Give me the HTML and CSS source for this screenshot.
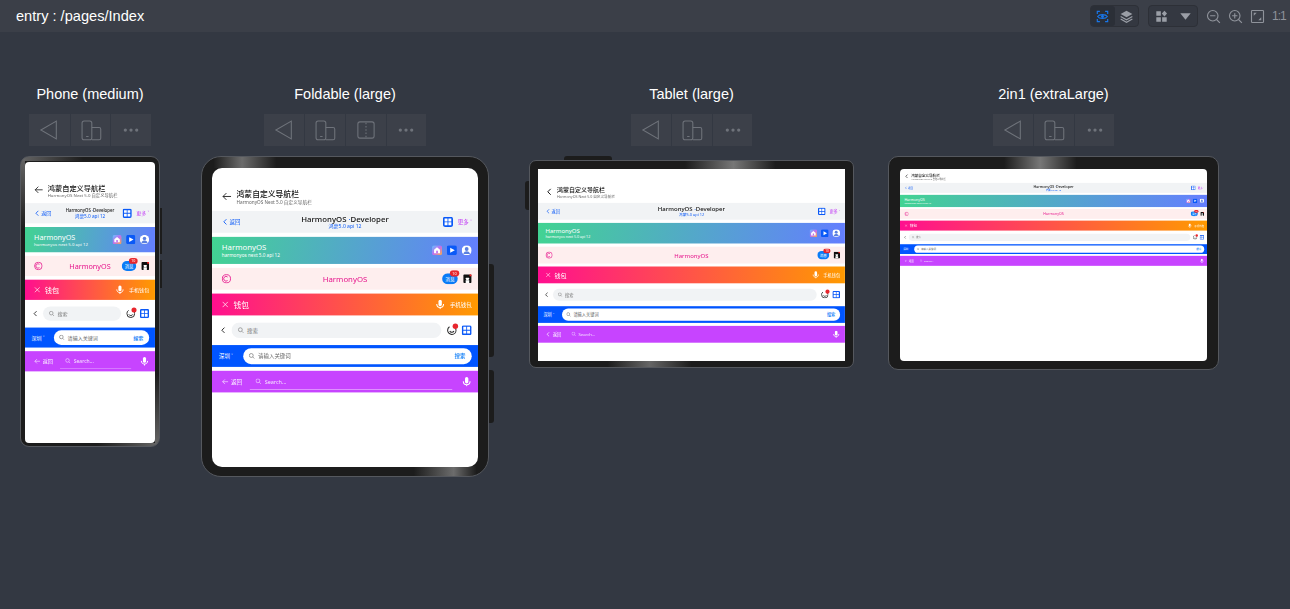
FILE: index.html
```html
<!DOCTYPE html>
<html lang="zh">
<head>
<meta charset="utf-8">
<title>Previewer</title>
<link rel="stylesheet" href="styles.css">
</head>
<body>
<svg class="defs" width="0" height="0" aria-hidden="true">
  <defs>
    <linearGradient id="appg" x1="0" y1="0" x2="1" y2="1"><stop offset="0" stop-color="#5ec8ff"/><stop offset=".5" stop-color="#c06cf0"/><stop offset="1" stop-color="#ffb03a"/></linearGradient>
    <symbol id="i-arrow" viewBox="0 0 24 24"><path d="M22 12H3M11 4l-8 8 8 8" fill="none" stroke="currentColor" stroke-width="2"/></symbol>
    <symbol id="i-chev" viewBox="0 0 24 24"><path d="M16 3l-9 9 9 9" fill="none" stroke="currentColor" stroke-width="3"/></symbol>
    <symbol id="i-close" viewBox="0 0 24 24"><path d="M3 3l18 18M21 3L3 21" fill="none" stroke="currentColor" stroke-width="2.4"/></symbol>
    <symbol id="i-search" viewBox="0 0 24 24"><circle cx="10" cy="10" r="7.5" fill="none" stroke="currentColor" stroke-width="2.4"/><path d="M16 16l6 6" stroke="currentColor" stroke-width="2.4"/></symbol>
    <symbol id="i-grid" viewBox="0 0 24 24"><rect width="24" height="24" rx="5" fill="currentColor"/><path d="M4 4h7v7H4zM13 4h7v7h-7zM4 13h7v7H4zM13 13h7v7h-7z" fill="#fff"/></symbol>
    <symbol id="i-app" viewBox="0 0 24 24"><rect width="24" height="24" rx="6" fill="url(#appg)"/><path d="M12 5l7 6v8H5v-8z" fill="#fff"/><rect x="10" y="13" width="4" height="6" fill="#c06cf0"/></symbol>
    <symbol id="i-play" viewBox="0 0 24 24"><rect width="24" height="24" rx="5" fill="#0a59f7"/><path d="M8 6l11 6-11 6z" fill="#fff"/></symbol>
    <symbol id="i-user" viewBox="0 0 24 24"><circle cx="12" cy="12" r="12" fill="#fff"/><circle cx="12" cy="9" r="4.5" fill="#5a7fe0"/><path d="M4 21c1-5 5-6.500 8-6.500s7 1.500 8 6.500" fill="#5a7fe0"/></symbol>
    <symbol id="i-ring" viewBox="0 0 24 24"><circle cx="12" cy="12" r="10.500" fill="none" stroke="currentColor" stroke-width="2.200"/><path d="M15 7.500A6 6 0 1 0 15 16.500" fill="none" stroke="currentColor" stroke-width="2.200"/></symbol>
    <symbol id="i-pic" viewBox="0 0 24 24"><rect width="24" height="24" rx="3" fill="#111"/><circle cx="12" cy="11" r="5" fill="#fff"/><rect x="7" y="16" width="10" height="8" fill="#fff"/><path d="M6 9h12V4H6z" fill="#111"/><rect x="18" width="6" height="5" fill="#f22"/></symbol>
    <symbol id="i-mic" viewBox="0 0 24 24"><rect x="8" y="1" width="8" height="15" rx="4" fill="currentColor"/><path d="M4 11c0 5 3 8 8 8s8-3 8-8M12 19v4" fill="none" stroke="currentColor" stroke-width="2.400"/></symbol>
    <symbol id="i-face" viewBox="0 0 24 24"><circle cx="12" cy="12" r="10" fill="none" stroke="#222" stroke-width="2.400" stroke-dasharray="40 10"/><path d="M7 14c2 4 8 4 10 0" fill="none" stroke="#222" stroke-width="2.400"/></symbol>
    <symbol id="t-back" viewBox="0 0 32 32"><path d="M25 5v22L6 16z" fill="none" stroke="currentColor" stroke-width="1.300"/></symbol>
    <symbol id="t-rotate" viewBox="0 0 32 32"><rect x="5" y="5" width="12" height="23" rx="2.500" fill="none" stroke="currentColor" stroke-width="1.300"/><path d="M10 24h3M17 13h9a2 2 0 0 1 2 2v11a2 2 0 0 1-2 2h-9" fill="none" stroke="currentColor" stroke-width="1.300"/></symbol>
    <symbol id="t-fold" viewBox="0 0 32 32"><rect x="6" y="6" width="20" height="20" rx="2.500" fill="none" stroke="currentColor" stroke-width="1.300"/><path d="M16 7v18" stroke="currentColor" stroke-width="1.300" stroke-dasharray="2 2"/></symbol>
    <symbol id="t-more" viewBox="0 0 32 32"><circle cx="9" cy="16" r="2" fill="currentColor"/><circle cx="16" cy="16" r="2" fill="currentColor"/><circle cx="23" cy="16" r="2" fill="currentColor"/></symbol>
    <symbol id="h-eye" viewBox="0 0 20 20"><path d="M2 6V2h4M14 2h4v4M18 14v4h-4M6 18H2v-4" fill="none" stroke="currentColor" stroke-width="1.800"/><path d="M2.500 10C5 6 15 6 17.500 10 15 14 5 14 2.500 10z" fill="none" stroke="currentColor" stroke-width="1.800"/><circle cx="10" cy="10" r="2.200" fill="currentColor"/></symbol>
    <symbol id="h-layers" viewBox="0 0 20 20"><path d="M10 1l9 5-9 5-9-5z" fill="currentColor"/><path d="M1 10l9 5 9-5M1 14l9 5 9-5" fill="none" stroke="currentColor" stroke-width="1.800"/></symbol>
    <symbol id="h-tiles" viewBox="0 0 20 20"><path d="M2 2h7v7H2zM2 11h7v7H2zM11 11h7v7h-7z" fill="currentColor"/><path d="M14.500 1l4 4.500-4 4.500-4-4.500z" fill="currentColor"/></symbol>
    <symbol id="h-down" viewBox="0 0 20 20"><path d="M2 5h16l-8 10z" fill="currentColor"/></symbol>
    <symbol id="h-out" viewBox="0 0 20 20"><circle cx="9" cy="9" r="7" fill="none" stroke="currentColor" stroke-width="1.500"/><path d="M5.500 9h7M14 14l4.500 4.500" stroke="currentColor" stroke-width="1.500"/></symbol>
    <symbol id="h-in" viewBox="0 0 20 20"><circle cx="9" cy="9" r="7" fill="none" stroke="currentColor" stroke-width="1.500"/><path d="M5.500 9h7M9 5.500v7M14 14l4.500 4.500" stroke="currentColor" stroke-width="1.500"/></symbol>
    <symbol id="h-fit" viewBox="0 0 20 20"><rect x="2" y="2" width="16" height="16" rx="1" fill="none" stroke="currentColor" stroke-width="1.500"/><path d="M11 15h4v-4zM9 5H5v4z" fill="currentColor"/></symbol>
  </defs>
</svg>

<header class="topbar">
  <div class="route">entry : /pages/Index</div>
  <div class="tools">
    <div class="seg seg-a">
      <span class="seg-btn active"><svg class="hi"><use href="#h-eye"/></svg></span>
      <span class="seg-btn"><svg class="hi"><use href="#h-layers"/></svg></span>
    </div>
    <div class="seg seg-b">
      <span class="seg-btn"><svg class="hi"><use href="#h-tiles"/></svg></span>
      <span class="seg-btn"><svg class="hi"><use href="#h-down"/></svg></span>
    </div>
    <svg class="hi plain"><use href="#h-out"/></svg>
    <svg class="hi plain"><use href="#h-in"/></svg>
    <svg class="hi plain"><use href="#h-fit"/></svg>
    <span class="one">1:1</span>
  </div>
</header>

<main class="stage">

  <section class="col col-phone">
    <h2 class="label">Phone (medium)</h2>
    <div class="toolbar">
      <span class="tbtn"><svg class="ti"><use href="#t-back"/></svg></span>
      <span class="tbtn"><svg class="ti"><use href="#t-rotate"/></svg></span>
      <span class="tbtn"><svg class="ti"><use href="#t-more"/></svg></span>
    </div>
    <div class="frame">
      <i class="side side-a"></i><i class="side side-b"></i>
      <div class="screen">
        <div class="app">
          <div class="r-title"><svg class="ic back"><use href="#i-arrow"/></svg><div><div class="t1">鸿蒙自定义导航栏</div><div class="t2">HarmonyOS Next 5.0 自定义导航栏</div></div></div>
          <div class="row r-light"><div class="grp"><svg class="ic sm blue"><use href="#i-chev"/></svg><span class="link">返回</span></div><div class="mid"><div class="mid1">HarmonyOS <span class="blue">·</span>Developer</div><div class="mid2">鸿蒙5.0 api 12</div></div><div class="grp end"><svg class="ic blue"><use href="#i-grid"/></svg><span class="more">更多 ˅</span></div></div>
          <div class="row r-green"><div class="fill"><div class="g1">HarmonyOS</div><div class="g2">harmonyos next 5.0 api 12</div></div><div class="grp icons"><svg class="ic"><use href="#i-app"/></svg><svg class="ic"><use href="#i-play"/></svg><svg class="ic"><use href="#i-user"/></svg></div></div>
          <div class="row r-pink"><svg class="ic ringc"><use href="#i-ring"/></svg><div class="pink-title">HarmonyOS</div><div class="grp"><span class="pill-msg">消息<b class="badge">10</b></span><svg class="ic pic"><use href="#i-pic"/></svg></div></div>
          <div class="row r-grad"><svg class="ic white sm"><use href="#i-close"/></svg><span class="wallet">钱包</span><span class="fill"></span><svg class="ic white"><use href="#i-mic"/></svg><span class="wallet2">手机钱包</span></div>
          <div class="row r-search"><svg class="ic sm"><use href="#i-chev"/></svg><div class="gray-pill"><svg class="ic xs"><use href="#i-search"/></svg><span>搜索</span></div><span class="dot-wrap"><svg class="ic"><use href="#i-face"/></svg><b class="dot"></b></span><svg class="ic blue"><use href="#i-grid"/></svg></div>
          <div class="row r-blue"><span class="city">深圳 ˅</span><div class="white-pill"><svg class="ic xs"><use href="#i-search"/></svg><span class="fill">请输入关键词</span><span class="go">搜索</span></div></div>
          <div class="row r-purple"><svg class="ic white sm"><use href="#i-arrow"/></svg><span class="pback">返回</span><div class="under"><svg class="ic xs"><use href="#i-search"/></svg><span>Search...</span></div><svg class="ic white"><use href="#i-mic"/></svg></div>
        </div>
      </div>
    </div>
  </section>

  <section class="col col-fold">
    <h2 class="label">Foldable (large)</h2>
    <div class="toolbar">
      <span class="tbtn"><svg class="ti"><use href="#t-back"/></svg></span>
      <span class="tbtn"><svg class="ti"><use href="#t-rotate"/></svg></span>
      <span class="tbtn"><svg class="ti"><use href="#t-fold"/></svg></span>
      <span class="tbtn"><svg class="ti"><use href="#t-more"/></svg></span>
    </div>
    <div class="frame">
      <i class="side side-a"></i><i class="side side-b"></i>
      <div class="screen">
        <div class="app">
          <div class="r-title"><svg class="ic back"><use href="#i-arrow"/></svg><div><div class="t1">鸿蒙自定义导航栏</div><div class="t2">HarmonyOS Next 5.0 自定义导航栏</div></div></div>
          <div class="row r-light"><div class="grp"><svg class="ic sm blue"><use href="#i-chev"/></svg><span class="link">返回</span></div><div class="mid"><div class="mid1">HarmonyOS <span class="blue">·</span>Developer</div><div class="mid2">鸿蒙5.0 api 12</div></div><div class="grp end"><svg class="ic blue"><use href="#i-grid"/></svg><span class="more">更多 ˅</span></div></div>
          <div class="row r-green"><div class="fill"><div class="g1">HarmonyOS</div><div class="g2">harmonyos next 5.0 api 12</div></div><div class="grp icons"><svg class="ic"><use href="#i-app"/></svg><svg class="ic"><use href="#i-play"/></svg><svg class="ic"><use href="#i-user"/></svg></div></div>
          <div class="row r-pink"><svg class="ic ringc"><use href="#i-ring"/></svg><div class="pink-title">HarmonyOS</div><div class="grp"><span class="pill-msg">消息<b class="badge">10</b></span><svg class="ic pic"><use href="#i-pic"/></svg></div></div>
          <div class="row r-grad"><svg class="ic white sm"><use href="#i-close"/></svg><span class="wallet">钱包</span><span class="fill"></span><svg class="ic white"><use href="#i-mic"/></svg><span class="wallet2">手机钱包</span></div>
          <div class="row r-search"><svg class="ic sm"><use href="#i-chev"/></svg><div class="gray-pill"><svg class="ic xs"><use href="#i-search"/></svg><span>搜索</span></div><span class="dot-wrap"><svg class="ic"><use href="#i-face"/></svg><b class="dot"></b></span><svg class="ic blue"><use href="#i-grid"/></svg></div>
          <div class="row r-blue"><span class="city">深圳 ˅</span><div class="white-pill"><svg class="ic xs"><use href="#i-search"/></svg><span class="fill">请输入关键词</span><span class="go">搜索</span></div></div>
          <div class="row r-purple"><svg class="ic white sm"><use href="#i-arrow"/></svg><span class="pback">返回</span><div class="under"><svg class="ic xs"><use href="#i-search"/></svg><span>Search...</span></div><svg class="ic white"><use href="#i-mic"/></svg></div>
        </div>
      </div>
    </div>
  </section>

  <section class="col col-tablet">
    <h2 class="label">Tablet (large)</h2>
    <div class="toolbar">
      <span class="tbtn"><svg class="ti"><use href="#t-back"/></svg></span>
      <span class="tbtn"><svg class="ti"><use href="#t-rotate"/></svg></span>
      <span class="tbtn"><svg class="ti"><use href="#t-more"/></svg></span>
    </div>
    <div class="frame">
      <i class="side side-a"></i><i class="side side-b"></i>
      <div class="screen">
        <div class="app">
          <div class="r-title"><svg class="ic back"><use href="#i-chev"/></svg><div><div class="t1">鸿蒙自定义导航栏</div><div class="t2">HarmonyOS Next 5.0 自定义导航栏</div></div></div>
          <div class="row r-light"><div class="grp"><svg class="ic sm blue"><use href="#i-chev"/></svg><span class="link">返回</span></div><div class="mid"><div class="mid1">HarmonyOS <span class="blue">·</span>Developer</div><div class="mid2">鸿蒙5.0 api 12</div></div><div class="grp end"><svg class="ic blue"><use href="#i-grid"/></svg><span class="more">更多 ˅</span></div></div>
          <div class="row r-green"><div class="fill"><div class="g1">HarmonyOS</div><div class="g2">harmonyos next 5.0 api 12</div></div><div class="grp icons"><svg class="ic"><use href="#i-app"/></svg><svg class="ic"><use href="#i-play"/></svg><svg class="ic"><use href="#i-user"/></svg></div></div>
          <div class="row r-pink"><svg class="ic ringc"><use href="#i-ring"/></svg><div class="pink-title">HarmonyOS</div><div class="grp"><span class="pill-msg">消息<b class="badge">10</b></span><svg class="ic pic"><use href="#i-pic"/></svg></div></div>
          <div class="row r-grad"><svg class="ic white sm"><use href="#i-close"/></svg><span class="wallet">钱包</span><span class="fill"></span><svg class="ic white"><use href="#i-mic"/></svg><span class="wallet2">手机钱包</span></div>
          <div class="row r-search"><svg class="ic sm"><use href="#i-chev"/></svg><div class="gray-pill"><svg class="ic xs"><use href="#i-search"/></svg><span>搜索</span></div><span class="dot-wrap"><svg class="ic"><use href="#i-face"/></svg><b class="dot"></b></span><svg class="ic blue"><use href="#i-grid"/></svg></div>
          <div class="row r-blue"><span class="city">深圳 ˅</span><div class="white-pill"><svg class="ic xs"><use href="#i-search"/></svg><span class="fill">请输入关键词</span><span class="go">搜索</span></div></div>
          <div class="row r-purple"><svg class="ic white sm"><use href="#i-chev"/></svg><span class="pback">返回</span><div class="under"><svg class="ic xs"><use href="#i-search"/></svg><span>Search...</span></div><svg class="ic white"><use href="#i-mic"/></svg></div>
        </div>
      </div>
    </div>
  </section>

  <section class="col col-2in1">
    <h2 class="label">2in1 (extraLarge)</h2>
    <div class="toolbar">
      <span class="tbtn"><svg class="ti"><use href="#t-back"/></svg></span>
      <span class="tbtn"><svg class="ti"><use href="#t-rotate"/></svg></span>
      <span class="tbtn"><svg class="ti"><use href="#t-more"/></svg></span>
    </div>
    <div class="frame">
      <div class="screen">
        <div class="app">
          <div class="r-title"><svg class="ic back"><use href="#i-chev"/></svg><div><div class="t1">鸿蒙自定义导航栏</div><div class="t2">HarmonyOS Next 5.0 自定义导航栏</div></div></div>
          <div class="row r-light"><div class="grp"><svg class="ic sm blue"><use href="#i-chev"/></svg><span class="link">返回</span></div><div class="mid"><div class="mid1">HarmonyOS <span class="blue">·</span>Developer</div><div class="mid2">鸿蒙5.0 api 12</div></div><div class="grp end"><svg class="ic blue"><use href="#i-grid"/></svg><span class="more">更多 ˅</span></div></div>
          <div class="row r-green"><div class="fill"><div class="g1">HarmonyOS</div><div class="g2">harmonyos next 5.0 api 12</div></div><div class="grp icons"><svg class="ic"><use href="#i-app"/></svg><svg class="ic"><use href="#i-play"/></svg><svg class="ic"><use href="#i-user"/></svg></div></div>
          <div class="row r-pink"><svg class="ic ringc"><use href="#i-ring"/></svg><div class="pink-title">HarmonyOS</div><div class="grp"><span class="pill-msg">消息<b class="badge">10</b></span><svg class="ic pic"><use href="#i-pic"/></svg></div></div>
          <div class="row r-grad"><svg class="ic white sm"><use href="#i-close"/></svg><span class="wallet">钱包</span><span class="fill"></span><svg class="ic white"><use href="#i-mic"/></svg><span class="wallet2">手机钱包</span></div>
          <div class="row r-search"><svg class="ic sm"><use href="#i-chev"/></svg><div class="gray-pill"><svg class="ic xs"><use href="#i-search"/></svg><span>搜索</span></div><span class="dot-wrap"><svg class="ic"><use href="#i-face"/></svg><b class="dot"></b></span><svg class="ic blue"><use href="#i-grid"/></svg></div>
          <div class="row r-blue"><span class="city">深圳 ˅</span><div class="white-pill"><svg class="ic xs"><use href="#i-search"/></svg><span class="fill">请输入关键词</span><span class="go">搜索</span></div></div>
          <div class="row r-purple"><svg class="ic white sm"><use href="#i-arrow"/></svg><span class="pback">返回</span><div class="under"><svg class="ic xs"><use href="#i-search"/></svg><span>Search...</span></div><svg class="ic white"><use href="#i-mic"/></svg></div>
        </div>
      </div>
    </div>
  </section>

</main>
</body>
</html>
```
FILE: styles.css
```css
* { box-sizing: border-box; }
html, body { margin: 0; height: 100%; }
body {
  width: 1290px; height: 609px; overflow: hidden;
  background: #333842; color: #fff;
  font-family: "Liberation Sans", Arial, sans-serif;
}
.defs { display: block; height: 0; }

/* top bar */
.topbar {
  height: 32px; background: #3b3f48;
  display: flex; align-items: center; justify-content: space-between;
  padding: 0 4px 0 16px;
}
.route { font-size: 14.6px; line-height: 17px; }
.tools { display: flex; align-items: center; color: #9a9ea6; }
.seg {
  display: flex; height: 22px; border-radius: 4px;
  background: #343841; border: 1px solid #2d3037;
}
.seg-a { width: 49px; }
.seg-b { width: 50px; margin-left: 9px; margin-right: 8px; }
.seg-btn { flex: 1; display: flex; align-items: center; justify-content: center; border-radius: 3px; }
.seg-btn.active { background: #2b2f37; color: #1976e8; }
.hi { width: 13px; height: 13px; display: block; }
.plain { width: 15px; height: 15px; margin-right: 7px; color: #8f939b; }
.one { font-size: 12px; color: #8f939b; letter-spacing: -1px; width: 14px; white-space: nowrap; }

/* stage */
.stage { display: flex; align-items: flex-start; padding: 53px 0 0 20px; }
.col { display: flex; flex-direction: column; align-items: center; }
.col-phone { width: 140px; }
.col-fold { width: 288px; margin-left: 41px; }
.col-tablet { width: 325px; margin-left: 40px; }
.col-2in1 { width: 331px; margin-left: 34px; }
.label { margin: 0; font-size: 14.5px; line-height: 18px; font-weight: 400; white-space: nowrap; }
.toolbar { display: flex; height: 32px; margin-top: 11px; }
.tbtn {
  width: 40.670px; background: #3c4049; color: #6f737b;
  display: flex; align-items: center; justify-content: center;
  border-left: 1px solid #333842;
}
.tbtn:first-child { border-left: 0; }
.ti { width: 26px; height: 26px; display: block; }

/* device frames */
.frame { position: relative; margin-top: 10px; background-color: #1c1c1c; border: 1px solid #55585e; background-repeat: no-repeat; }
.screen { background: #fff; overflow: hidden; }
.app { transform-origin: 0 0; transform: scale(var(--s)); width: var(--w); color: #111; font-family: "Noto Sans", "Noto Sans CJK SC", sans-serif; }
.side { position: absolute; background: #1c1c1c; display: block; }

.col-phone .frame {
  width: 140px; height: 291px; border-radius: 9px; padding: 5px 4px 3px 4px;
  background-image:
    linear-gradient(90deg, #666, transparent),
    linear-gradient(180deg, #666, transparent),
    linear-gradient(90deg, transparent, #666),
    linear-gradient(180deg, transparent, #666);
  background-size: 45% 4px, 4px 25%, 45% 3px, 4px 25%;
  background-position: 0 0, 0 0, 100% 100%, 100% 100%;
}
.col-phone .screen { width: 130px; height: 281px; border-radius: 4px; }
.col-phone .app { --s: .361; --w: 360px; --top: 114px; }
.col-phone .side-a { right: -3px; top: 51px; width: 2px; height: 46px; }
.col-phone .side-b { right: -3px; top: 103px; width: 2px; height: 28px; }
.col-phone .mid1 { font-size: 12px; line-height: 15px; }
.col-phone .mid2 { font-size: 13px; line-height: 17px; }

.col-fold .frame {
  width: 288px; height: 321px; border-radius: 20px; padding: 11px 10px 9px 10px;
  background-image:
    linear-gradient(90deg, transparent 4%, #6c6c6c 14%, transparent 26%),
    linear-gradient(90deg, transparent 74%, #6c6c6c 88%, transparent 96%);
  background-size: 100% 11px, 100% 10px;
  background-position: 0 0, 0 100%;
}
.col-fold .screen { width: 266px; height: 299px; border-radius: 10px; }
.col-fold .app { --s: .39; --w: 682px; --top: 110px; }
.col-fold .side-a { right: -6px; top: 107px; width: 5px; height: 93px; border-radius: 0 3px 3px 0; }
.col-fold .side-b { right: -6px; top: 213px; width: 5px; height: 53px; border-radius: 0 3px 3px 0; }

.col-tablet .frame {
  width: 325px; height: 208px; margin-top: 14px; border-radius: 7px; padding: 8px 8px 6px 8px;
  background-image:
    linear-gradient(90deg, transparent 48%, #777 63%, transparent 76%),
    linear-gradient(90deg, transparent 24%, #666 37%, transparent 50%);
  background-size: 100% 8px, 100% 6px;
  background-position: 0 0, 0 100%;
}
.col-tablet .screen { width: 307px; height: 192px; }
.col-tablet .app { --s: .3; --w: 1023px; --top: 113px; }
.col-tablet .side-a { left: 34px; top: -5px; width: 48px; height: 4px; border-radius: 3px 3px 0 0; }
.col-tablet .side-b { left: -5px; top: 20px; width: 4px; height: 29px; border-radius: 3px 0 0 3px; }

.col-2in1 .frame {
  width: 331px; height: 214px; border-radius: 10px; padding: 12px 10px 8px 11px;
  background-image: linear-gradient(90deg, transparent 35%, #777 46%, transparent 57%);
  background-size: 100% 12px;
}
.col-2in1 .screen { width: 307px; height: 192px; border-radius: 4px; }
.col-2in1 .app { --s: .178; --w: 1725px; --top: 78px; }

/* app content (virtual px, scaled per device) */
.r-title { height: var(--top); display: flex; align-items: flex-end; padding: 0 0 14px 25px; }
.back { width: 22px; height: 22px; margin: 0 12px 10px 0; }
.t1 { font-size: 20px; line-height: 24px; font-weight: 500; }
.t2 { font-size: 12px; line-height: 16px; color: #666; white-space: nowrap; }
.row { height: 56px; margin-bottom: 10px; display: flex; align-items: center; padding: 0 16px 0 25px; position: relative; }
.grp { display: flex; align-items: center; }
.end { justify-content: flex-end; }
.fill { flex: 1; min-width: 0; }
.ic { width: 26px; height: 26px; display: block; flex: none; }
.ic.sm { width: 18px; height: 18px; }
.ic.xs { width: 16px; height: 16px; }
.blue { color: #0a59f7; }
.white { color: #fff; }

.r-light { background: #f1f3f5; justify-content: space-between; }
.link { color: #0a59f7; font-size: 14px; margin-left: 2px; }
.mid { position: absolute; left: 0; right: 0; text-align: center; }
.mid1 { font-size: 20px; line-height: 24px; font-weight: 500; white-space: nowrap; }
.mid2 { font-size: 13px; line-height: 15px; color: #0a59f7; }
.more { color: #c340f5; font-size: 14px; margin-left: 12px; white-space: nowrap; }
.grp.end { position: relative; }

.r-green { height: 70px; color: #fff; background: linear-gradient(100deg, #42d392, #647eff); }
.g1 { font-size: 20px; line-height: 25px; }
.g2 { font-size: 12px; line-height: 15px; white-space: nowrap; }
.icons { gap: 12px; }

.r-pink { background: #feeeee; justify-content: space-between; }
.ringc { color: #e6148c; width: 24px; height: 24px; }
.pink-title { position: absolute; left: 0; right: 0; text-align: center; color: #e6148c; font-size: 20px; }
.r-pink .grp { position: relative; }
.pill-msg {
  position: relative; background: #0a7bf7; color: #fff; font-size: 12px;
  width: 40px; height: 28px; border-radius: 14px;
  display: flex; align-items: center; justify-content: center;
}
.badge {
  position: absolute; right: -4px; top: -8px; width: 24px; height: 16px; border-radius: 8px;
  background: #e8262d; font-size: 10px; line-height: 16px; text-align: center; font-weight: 400;
}
.pic { width: 22px; height: 24px; margin-left: 14px; }

.r-grad { background: linear-gradient(90deg, #ff0f8f, #ff9a00); color: #fff; }
.wallet { font-size: 20px; margin-left: 12px; }
.wallet2 { font-size: 14px; margin-left: 12px; white-space: nowrap; }

.r-search { background: #fff; padding-left: 20px; }
.gray-pill {
  flex: 1; height: 40px; border-radius: 20px; background: #f1f3f5; margin: 0 14px 0 12px;
  display: flex; align-items: center; padding-left: 16px; color: #777; font-size: 14px; gap: 8px;
}
.dot-wrap { position: relative; display: block; margin-right: 12px; }
.dot { position: absolute; right: -3px; top: -4px; width: 14px; height: 14px; border-radius: 7px; background: #e8262d; }

.r-blue { background: #0055ff; padding: 0 16px 0 18px; }
.city { color: #fff; font-size: 14px; width: 62px; white-space: nowrap; flex: none; }
.white-pill {
  flex: 1; height: 41px; border-radius: 21px; background: #fff; color: #666; font-size: 14px;
  display: flex; align-items: center; gap: 8px; padding: 0 16px 0 14px;
}
.go { color: #0a7bf7; font-weight: 500; }

.r-purple { background: #c744ff; color: #fff; padding-right: 16px; }
.pback { font-size: 14px; margin-left: 6px; width: 48px; flex: none; }
.under {
  flex: 1; height: 42px; margin: 0 24px 0 0; display: flex; align-items: center; gap: 8px; padding-left: 14px;
  border-bottom: 2px solid rgba(255,255,255,.55); font-size: 14px; color: rgba(255,255,255,.85);
}
.col-tablet .under, .col-2in1 .under { border-bottom-color: transparent; }
```
